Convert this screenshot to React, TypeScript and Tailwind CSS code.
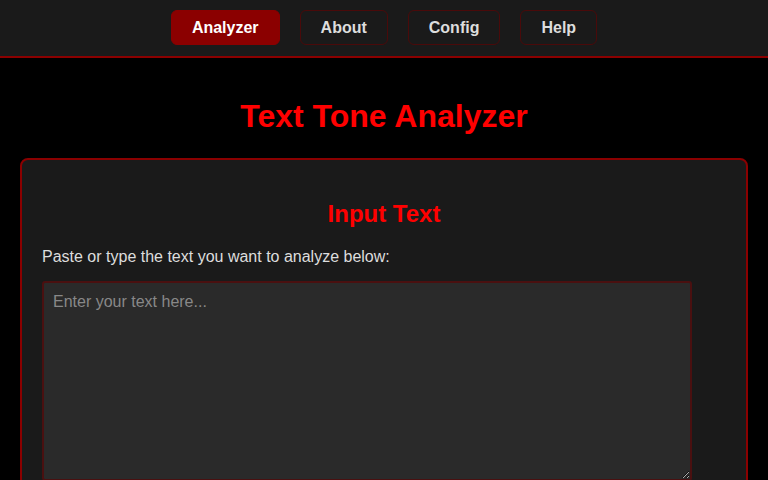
const TABS = ['Analyzer', 'About', 'Config', 'Help'];

export default function App() {
  return (
    <div
      className="min-h-screen bg-black text-[#dddddd]"
      style={{ fontFamily: '"Liberation Sans", Arial, sans-serif' }}
    >
      {/* Top nav */}
      <nav className="flex justify-center gap-5 bg-[#1a1a1a] border-b-2 border-[#8b0000] h-[58px] pt-[10px]">
        {TABS.map((tab, i) => (
          <button
            key={tab}
            type="button"
            className={
              i === 0
                ? 'h-[35px] px-5 rounded-md bg-[#8b0000] border border-[#8b0000] text-white font-bold text-base'
                : 'h-[35px] px-5 rounded-md bg-[#1a1a1a] border border-[#4a0a0a] text-[#dddddd] font-bold text-base'
            }
          >
            {tab}
          </button>
        ))}
      </nav>

      <main className="px-5 pt-[40px]">
        <h1 className="text-center text-[32px] font-bold text-[#ff0000] leading-[37px] mb-[23px]">
          Text Tone Analyzer
        </h1>

        <section className="bg-[#1a1a1a] border-2 border-[#8b0000] rounded-lg px-5 pt-[40px] pb-5">
          <h2 className="text-center text-2xl font-bold text-[#ff0000] leading-[28px] mb-[20px]">
            Input Text
          </h2>
          <p className="text-base leading-[18px] mb-[15px]">
            Paste or type the text you want to analyze below:
          </p>
          <textarea
            placeholder="Enter your text here..."
            className="block w-[650px] h-[200px] bg-[#2a2a2a] border-2 border-[#4a1010] rounded-[3px] px-[9px] py-[7px] text-base text-[#dddddd] placeholder:text-[#888888] outline-none"
          />
        </section>
      </main>
    </div>
  );
}
